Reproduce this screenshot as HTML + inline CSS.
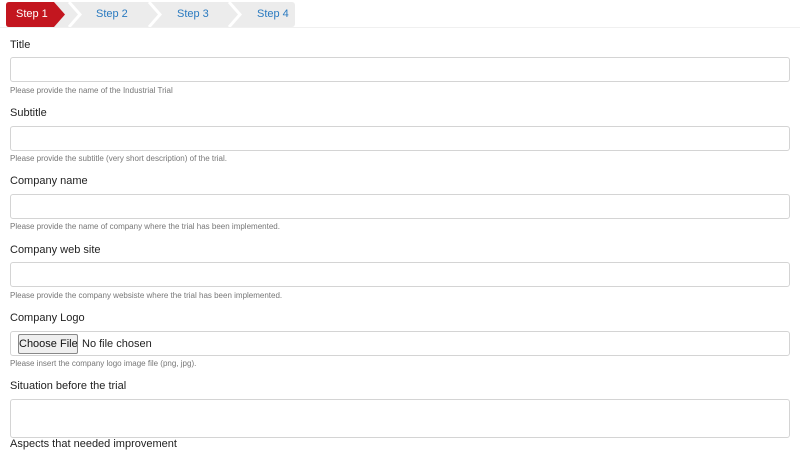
<!DOCTYPE html>
<html><head><style>
body{margin:0;width:800px;height:450px;overflow:hidden;background:#fff;font-family:"Liberation Sans",sans-serif;position:relative}
.tabs{position:absolute;left:6px;top:2px;width:289px;height:25px;background:#ececec;border-radius:3px}
.tab{position:absolute;top:0;height:25px;line-height:25px;font-size:11px;color:#2a7ac0}
.lbl{position:absolute;left:10px;font-size:11px;color:#222;white-space:nowrap}
.inp{position:absolute;left:10px;width:778px;height:23px;border:1px solid #d4d4d4;border-radius:3px;background:#fff}
.help{position:absolute;left:10px;font-size:8px;color:#777;white-space:nowrap}
.line{position:absolute;left:0;top:27px;width:800px;height:1px;background:#f0f0f0}
</style></head><body>
<div class="tabs">
<svg width="289" height="25" style="position:absolute;left:0;top:0">
<path d="M3 0 H48 L59 12.5 L48 25 H3 Q0 25 0 22 V3 Q0 0 3 0Z" fill="#c3161f"/>
<path d="M63 0 L74 12.5 L63 25" fill="none" stroke="#fff" stroke-width="3"/>
<path d="M143 0 L154 12.5 L143 25" fill="none" stroke="#fff" stroke-width="3"/>
<path d="M223 0 L234 12.5 L223 25" fill="none" stroke="#fff" stroke-width="3"/>
</svg>
<div class="tab" style="left:10px;color:#fff">Step 1</div>
<div class="tab" style="left:90px">Step 2</div>
<div class="tab" style="left:171px">Step 3</div>
<div class="tab" style="left:251px">Step 4</div>
</div>
<div class="line"></div>
<div class="lbl" style="top:39px">Title</div>
<div class="inp" style="top:57px"></div>
<div class="help" style="top:86px">Please provide the name of the Industrial Trial</div>
<div class="lbl" style="top:107px">Subtitle</div>
<div class="inp" style="top:126px"></div>
<div class="help" style="top:154px">Please provide the subtitle (very short description) of the trial.</div>
<div class="lbl" style="top:175px">Company name</div>
<div class="inp" style="top:194px"></div>
<div class="help" style="top:222px">Please provide the name of company where the trial has been implemented.</div>
<div class="lbl" style="top:244px">Company web site</div>
<div class="inp" style="top:262px"></div>
<div class="help" style="top:291px">Please provide the company websiste where the trial has been implemented.</div>
<div class="lbl" style="top:312px">Company Logo</div>
<div class="inp" style="top:331px"></div>
<div style="position:absolute;left:18px;top:334px;width:58px;height:18px;border:1px solid #888;border-radius:2px;background:#efefef;font-size:11px;line-height:18px;text-align:center;color:#111;white-space:nowrap;overflow:hidden">Choose File</div>
<div style="position:absolute;left:82px;top:338px;font-size:11px;color:#222;white-space:nowrap">No file chosen</div>
<div class="help" style="top:359px">Please insert the company logo image file (png, jpg).</div>
<div class="lbl" style="top:380px">Situation before the trial</div>
<div class="inp" style="top:399px;height:37px"></div>
<div class="lbl" style="top:438px">Aspects that needed improvement</div>
</body></html>
